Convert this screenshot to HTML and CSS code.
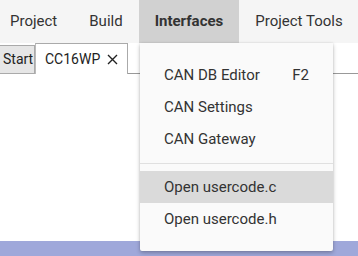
FILE: index.html
```html
<!DOCTYPE html>
<html>
<head>
<meta charset="utf-8">
<link rel="stylesheet" href="styles.css">
</head>
<body>
<div class="app">
  <nav class="menubar">
    <div class="mitem first">Project</div>
    <div class="mitem">Build</div>
    <div class="mitem active">Interfaces</div>
    <div class="mitem">Project Tools</div>
  </nav>
  <div class="tabs">
    <div class="tab start">Start</div>
    <div class="tab current"><span>CC16WP</span><svg class="close" width="11" height="11" viewBox="0 0 11 11"><path d="M1 1 L10 10 M10 1 L1 10" stroke="#222" stroke-width="1.4" fill="none"/></svg></div>
    <div class="tabfill"></div>
  </div>
  <div class="content"></div>
  <div class="status"></div>
  <div class="dropdown">
    <div class="ditem"><span>CAN DB Editor</span><span class="key">F2</span></div>
    <div class="ditem"><span>CAN Settings</span></div>
    <div class="ditem"><span>CAN Gateway</span></div>
    <div class="sep"></div>
    <div class="ditem hover"><span>Open usercode.c</span></div>
    <div class="ditem"><span>Open usercode.h</span></div>
  </div>
</div>
</body>
</html>
```
FILE: styles.css
```css
html, body { margin: 0; padding: 0; }
body { font-family: Roboto, "Noto Sans", sans-serif; color: #333; background: #fff; }
.app { position: relative; width: 358px; height: 256px; overflow: hidden; display: flex; flex-direction: column; }
.menubar { display: flex; height: 43px; background: #f5f5f5; flex: none; }
.mitem { padding: 0 16px; font-size: 15px; line-height: 43px; color: #333; white-space: nowrap; }
.mitem.first { padding-left: 10px; }
.mitem.active { background: #d1d1d1; font-weight: bold; }
.tabs { display: flex; align-items: flex-end; height: 31px; flex: none; }
.tab { box-sizing: border-box; font-size: 14px; color: #222; white-space: nowrap; }
.tab.start { width: 35px; height: 29px; background: #e6e6e6; border: 1px solid #aaa; border-left: none; padding-left: 3px; line-height: 27px; }
.tab.current { display: flex; align-items: center; gap: 7px; width: 93px; height: 31px; background: #fff; border: 1px solid #aaa; border-bottom: none; border-left-color: #bbb; padding-left: 9px; }
.close { flex: none; }
.tabfill { flex: 1; border-bottom: 1px solid #999; }
.content { flex: 1; background: #fff; }
.status { height: 15px; background: #9fa8da; flex: none; }
.dropdown { position: absolute; left: 140px; top: 43px; width: 193px; background: #fafafa; padding: 16px 0; box-shadow: 0 2px 4px rgba(0,0,0,0.25), 0 0 2px rgba(0,0,0,0.12); border-radius: 0 0 2px 2px; }
.ditem { display: flex; justify-content: space-between; height: 32px; line-height: 32px; padding: 0 24px 0 24px; font-size: 15px; color: #333; }
.ditem.hover { background: #dadada; }
.sep { height: 1px; background: #e0e0e0; margin: 8px 0 7px; }
```
